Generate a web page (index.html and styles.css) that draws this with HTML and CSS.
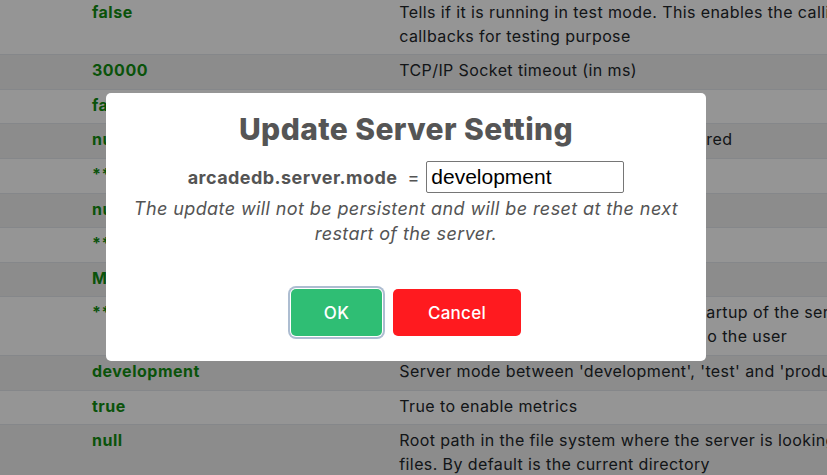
FILE: index.html
```html
<!DOCTYPE html>
<html>
<head>
<meta charset="utf-8">
<link rel="stylesheet" href="styles.css">
</head>
<body>
<div class="sheet">
  <table class="settings">
    <tr class="light"><td class="key"></td><td class="val">false</td><td class="desc">Tells if it is running in test mode. This enables the calling<br>callbacks for testing purpose</td></tr>
    <tr class="dark"><td class="key"></td><td class="val">30000</td><td class="desc">TCP/IP Socket timeout (in ms)</td></tr>
    <tr class="light"><td class="key"></td><td class="val">false</td><td class="desc">Use SSL for client/server connections</td></tr>
    <tr class="dark"><td class="key"></td><td class="val">null</td><td class="desc"><span class="under">Path where the SSL certificates are sto</span><span class="over">red</span></td></tr>
    <tr class="light"><td class="key"></td><td class="val">****</td><td class="desc">SSL keystore password</td></tr>
    <tr class="dark"><td class="key"></td><td class="val">null</td><td class="desc">Path of the SSL truststore</td></tr>
    <tr class="light"><td class="key"></td><td class="val">****</td><td class="desc">SSL truststore password</td></tr>
    <tr class="dark"><td class="key"></td><td class="val">MAJORITY</td><td class="desc">Default quorum</td></tr>
    <tr class="light"><td class="key"></td><td class="val">****</td><td class="desc"><span class="under">Password for root user, asked at st</span><span class="over">artup of the server</span><br><span class="under">if not set and then shown t</span><span class="over second">o the user</span></td></tr>
    <tr class="dark"><td class="key"></td><td class="val">development</td><td class="desc">Server mode between 'development', 'test' and 'production'</td></tr>
    <tr class="light"><td class="key"></td><td class="val">true</td><td class="desc">True to enable metrics</td></tr>
    <tr class="dark"><td class="key"></td><td class="val">null</td><td class="desc">Root path in the file system where the server is looking for<br>files. By default is the current directory</td></tr>
  </table>
</div>

<div class="overlay">
  <div class="dialog">
    <h2 class="title">Update Server Setting</h2>
    <div class="content">
      <div class="field"><b class="name">arcadedb.server.mode</b><span class="eq">=</span><input class="input" type="text" value="development"></div>
      <div class="note">The update will not be persistent and will be reset at the next<br>restart of the server.</div>
    </div>
    <div class="actions">
      <button class="btn btn-ok">OK</button>
      <button class="btn btn-cancel">Cancel</button>
    </div>
  </div>
</div>
</body>
</html>
```
FILE: styles.css
```css
html, body {
  margin: 0;
  padding: 0;
  overflow: hidden;
  background: #ffffff;
}
body {
  font-family: Inter, "Open Sans", sans-serif;
  color: #212529;
  width: 827px;
  height: 475px;
}
.sheet {
  margin-top: -4.3px;
}
.settings {
  border-collapse: collapse;
  width: 1100px;
  font-size: 16px;
  line-height: 24px;
}
.settings td {
  padding: 3px 4.8px 6.6px;
  border-top: 1px solid #dee2e6;
  vertical-align: top;
  white-space: nowrap;
}
.settings tr.light { background: #f8f8f8; }
.settings tr.dark { background: #eaeaea; }
.key { width: 77.6px; }
.val {
  width: 297.7px;
  font-weight: 700;
  letter-spacing: 0.5px;
  color: #118a12;
}
.desc {
  letter-spacing: 0.4px;
}
.under {
  display: inline-block;
  width: 307px;
  overflow: hidden;
  vertical-align: top;
}
.second {
  margin-left: 1px;
}

.overlay {
  position: fixed;
  inset: 0;
  background: rgba(0, 0, 0, 0.4);
  display: flex;
  align-items: center;
  justify-content: center;
  padding: 0 15px 21px 0;
}
.dialog {
  width: 600px;
  height: 268px;
  box-sizing: border-box;
  background: #ffffff;
  border-radius: 5px;
  padding: 16px 0 0;
  text-align: center;
  color: #545454;
}
.title {
  margin: 0;
  font-size: 30px;
  line-height: 40px;
  font-weight: 800;
  letter-spacing: 0.4px;
  color: #555555;
}
.content {
  margin-top: 12px;
  font-size: 18px;
}
.field {
  height: 32px;
  display: flex;
  align-items: center;
  justify-content: center;
}
.name {
  font-weight: 700;
  letter-spacing: 0.45px;
}
.eq {
  margin: 0 7px 0 10px;
}
.input {
  width: 198px;
  height: 32px;
  box-sizing: border-box;
  margin: 0;
  padding: 0 4px;
  border: 1px solid #767676;
  border-radius: 2px;
  font-family: "Liberation Sans", Arial, sans-serif;
  font-size: 21px;
  color: #000;
}
.note {
  margin-top: 3px;
  font-style: italic;
  line-height: 25px;
  letter-spacing: 0.4px;
}
.actions {
  margin-top: 43px;
  display: flex;
  justify-content: center;
  gap: 11px;
}
.btn {
  height: 47px;
  border: 0;
  border-radius: 5px;
  color: #ffffff;
  font-family: Inter, "Open Sans", sans-serif;
  font-size: 17px;
  font-weight: 500;
  letter-spacing: 0.3px;
  padding: 0;
}
.btn-ok {
  width: 91px;
  background: #2fbe74;
  box-shadow: 0 0 0 1px #ffffff, 0 0 0 3px #adbdd1;
}
.btn-cancel {
  width: 128px;
  background: #ff1a1f;
}
```
